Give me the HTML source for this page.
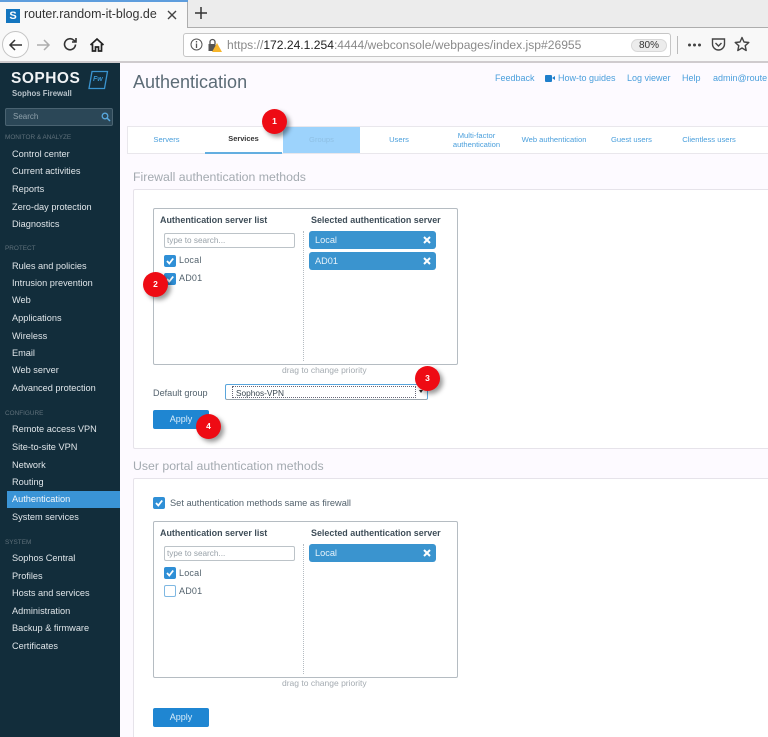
<!DOCTYPE html>
<html><head><meta charset="utf-8">
<style>
html,body{margin:0;padding:0;width:768px;height:737px;overflow:hidden;background:#fdfaff;font-family:"Liberation Sans",sans-serif}
#root{position:relative;width:768px;height:737px;overflow:hidden;filter:blur(.3px)}
.a{position:absolute;white-space:nowrap}
.nav{position:absolute;left:12px;color:#dfe5e9;font-size:9.2px;line-height:12px;white-space:nowrap}
.hd{position:absolute;left:5px;color:#5f707a;font-size:6.4px;line-height:10px;white-space:nowrap}
.tab{position:absolute;top:127px;height:26px;line-height:26px;text-align:center;color:#4a9fdc;font-size:7.6px}
.link{position:absolute;top:72px;color:#4a9fdc;font-size:9px;line-height:12px;white-space:nowrap}
.h2{position:absolute;left:133px;color:#a3aab0;font-size:12.3px;line-height:16px;white-space:nowrap}
.panel{position:absolute;left:133px;width:640px;background:#fff;border:1px solid #e6e3ea;border-radius:2px;box-sizing:border-box}
.box{position:absolute;left:153px;width:305px;height:157px;background:#fff;border:1px solid #b5bcc2;border-radius:2px;box-sizing:border-box}
.div{position:absolute;left:303px;width:0;border-left:1px dotted #b5bcc2}
.bh{position:absolute;color:#3f4e59;font-size:8.95px;font-weight:bold;line-height:12px;white-space:nowrap}
.inp{position:absolute;left:164px;width:131px;height:15px;border:1px solid #bcc3c8;border-radius:2px;box-sizing:border-box;color:#98a1a8;font-size:8.2px;line-height:13px;padding-left:2px;background:#fff}
.chip{position:absolute;left:309px;width:127px;height:18px;background:#3a94cf;border-radius:3px;color:#e6f2fa;font-size:9.2px;line-height:18px;padding-left:6px;box-sizing:border-box}
.chip svg{position:absolute;left:114px;top:5px}
.cb{position:absolute;left:164px;width:12px;height:12px;border-radius:2px;background:#2f8fd6;box-sizing:border-box}
.cb svg{position:absolute;left:1px;top:1px}
.cl{position:absolute;left:179px;color:#53626d;font-size:9px;line-height:12px;letter-spacing:.2px}
.btn{position:absolute;left:153px;width:56px;height:19px;background:#1f86d2;border-radius:2px;color:#d8ecfa;font-size:9px;line-height:18px;text-align:center}
.mark{position:absolute;width:25px;height:25px;border-radius:50%;background:#ee0b14;color:#fff;font-size:8.5px;font-weight:bold;line-height:25px;text-align:center;box-shadow:3px 3px 5px rgba(0,0,0,.4)}
</style></head><body><div id="root">

<!-- browser chrome -->
<div class="a" style="left:0;top:0;width:768px;height:28px;background:#ececec"></div>
<div class="a" style="left:0;top:27px;width:768px;height:1px;background:#adadad"></div>
<div class="a" style="left:0;top:0;width:188px;height:28px;background:#f8f8f8;border-right:1px solid #adadad;box-sizing:border-box"></div>
<div class="a" style="left:0;top:0;width:188px;height:2px;background:#5e9ddd"></div>
<div class="a" style="left:6px;top:9px;width:14px;height:14px;background:#1375bf;color:#fff;font-size:11px;font-weight:bold;line-height:14px;text-align:center">S</div>
<div class="a" style="left:24px;top:6px;color:#333;font-size:12.45px;line-height:17px">router.random-it-blog.de</div>
<svg class="a" style="left:166px;top:9px" width="12" height="12"><path d="M2 2L10 10M10 2L2 10" stroke="#444" stroke-width="1.4"/></svg>
<svg class="a" style="left:194px;top:6px" width="14" height="14"><path d="M7 1V13M1 7H13" stroke="#333" stroke-width="1.5"/></svg>

<div class="a" style="left:0;top:28px;width:768px;height:33px;background:#f8f8f8"></div>
<div class="a" style="left:0;top:61px;width:768px;height:2px;background:#cfcbce"></div>
<div class="a" style="left:2px;top:31px;width:27px;height:27px;border-radius:50%;background:#fdfdfd;border:1px solid #c4c4c4;box-sizing:border-box"></div>
<svg class="a" style="left:7px;top:36px" width="18" height="18"><path d="M15 9H3M8 4L3 9L8 14" fill="none" stroke="#333" stroke-width="1.5"/></svg>
<svg class="a" style="left:34px;top:36px" width="18" height="18"><path d="M3 9H15M10 4L15 9L10 14" fill="none" stroke="#adadad" stroke-width="1.5"/></svg>
<svg class="a" style="left:62px;top:36px" width="17" height="17"><path d="M13.5 8.5A5.5 5.5 0 1 1 11.5 4L13.5 5.5M14 2V6H10" fill="none" stroke="#333" stroke-width="1.6"/></svg>
<svg class="a" style="left:89px;top:37px" width="16" height="16"><path d="M1.5 8L8 2L14.5 8M3.5 7V14H6.5V10H9.5V14H12.5V7" fill="none" stroke="#222" stroke-width="1.7"/></svg>
<div class="a" style="left:183px;top:33px;width:488px;height:24px;background:#fff;border:1px solid #c6c6c6;border-radius:3px;box-sizing:border-box"></div>
<svg class="a" style="left:190px;top:38px" width="13" height="13"><circle cx="6.5" cy="6.5" r="5.5" fill="none" stroke="#555" stroke-width="1"/><path d="M6.5 5.500V10M6.5 3V4.500" stroke="#555" stroke-width="1.3"/></svg>
<svg class="a" style="left:207px;top:38px" width="15" height="14"><path d="M3 6V4A2.500 2.500 0 0 1 8 4V6" fill="none" stroke="#555" stroke-width="1.3"/><rect x="1.5" y="6" width="7" height="7" fill="#555"/><path d="M10 5L15 14H5Z" fill="#f6b52c"/></svg>
<div class="a" style="left:227px;top:37px;color:#8a8a8a;font-size:12.1px;line-height:16px">https://<span style="color:#222">172.24.1.254</span>:4444/webconsole/webpages/index.jsp#26955</div>
<div class="a" style="left:631px;top:39px;width:36px;height:13px;border-radius:7px;background:#ececec;border:1px solid #d8d8d8;box-sizing:border-box;color:#333;font-size:10px;line-height:11px;text-align:center">80%</div>
<div class="a" style="left:677px;top:36px;width:1px;height:18px;background:#bbb"></div>
<svg class="a" style="left:687px;top:41px" width="16" height="8"><circle cx="2.5" cy="4" r="1.5" fill="#444"/><circle cx="7.5" cy="4" r="1.5" fill="#444"/><circle cx="12.5" cy="4" r="1.5" fill="#444"/></svg>
<svg class="a" style="left:711px;top:37px" width="15" height="15"><path d="M1.500 2H13.500V7A6 6 0 0 1 1.500 7Z" fill="none" stroke="#444" stroke-width="1.4"/><path d="M4.500 6L7.500 9L10.500 6" fill="none" stroke="#444" stroke-width="1.4"/></svg>
<svg class="a" style="left:734px;top:36px" width="16" height="16"><path d="M8 1.500L10 6L14.800 6.500L11.200 9.700L12.200 14.500L8 12L3.800 14.500L4.800 9.700L1.200 6.500L6 6Z" fill="none" stroke="#444" stroke-width="1.4" stroke-linejoin="round"/></svg>

<!-- sidebar -->
<div class="a" style="left:0;top:63px;width:120px;height:674px;background:#122d3b"></div>
<div class="a" style="left:11px;top:69px;color:#f0f3f5;font-size:15.5px;font-weight:bold;line-height:20px;letter-spacing:.5px">SOPHOS</div>
<div class="a" style="left:12px;top:88px;color:#b7c2c9;font-size:7.8px;font-weight:bold;line-height:11px">Sophos Firewall</div>
<svg class="a" style="left:87px;top:70px" width="22" height="20"><path d="M5 1.500H20.500L17.500 18.500H2Z" fill="none" stroke="#3a94cf" stroke-width="1.3"/></svg>
<div class="a" style="left:93px;top:75px;color:#3a94cf;font-size:7px;font-style:italic;font-weight:bold;line-height:10px">Fw</div>
<div class="a" style="left:5px;top:108px;width:108px;height:18px;background:#2b4757;border:1px solid #4a6371;border-radius:2px;box-sizing:border-box"></div>
<div class="a" style="left:13px;top:111px;color:#8ea0aa;font-size:8px;line-height:12px">Search</div>
<svg class="a" style="left:101px;top:112px" width="10" height="10"><circle cx="4" cy="4" r="2.8" fill="none" stroke="#58a7dc" stroke-width="1.3"/><path d="M6 6L9 9" stroke="#58a7dc" stroke-width="1.5"/></svg>

<div class="hd" style="top:133px">MONITOR &amp; ANALYZE</div>
<div class="nav" style="top:148px">Control center</div>
<div class="nav" style="top:165px">Current activities</div>
<div class="nav" style="top:183px">Reports</div>
<div class="nav" style="top:201px">Zero-day protection</div>
<div class="nav" style="top:218px">Diagnostics</div>
<div class="hd" style="top:244px">PROTECT</div>
<div class="nav" style="top:260px">Rules and policies</div>
<div class="nav" style="top:277px">Intrusion prevention</div>
<div class="nav" style="top:294px">Web</div>
<div class="nav" style="top:312px">Applications</div>
<div class="nav" style="top:330px">Wireless</div>
<div class="nav" style="top:347px">Email</div>
<div class="nav" style="top:364px">Web server</div>
<div class="nav" style="top:382px">Advanced protection</div>
<div class="hd" style="top:409px">CONFIGURE</div>
<div class="nav" style="top:423px">Remote access VPN</div>
<div class="nav" style="top:441px">Site-to-site VPN</div>
<div class="nav" style="top:459px">Network</div>
<div class="nav" style="top:476px">Routing</div>
<div class="a" style="left:7px;top:491px;width:113px;height:17px;background:#3a94d6"></div>
<div class="nav" style="top:493px;color:#f2f7fb">Authentication</div>
<div class="nav" style="top:511px">System services</div>
<div class="hd" style="top:538px">SYSTEM</div>
<div class="nav" style="top:552px">Sophos Central</div>
<div class="nav" style="top:570px">Profiles</div>
<div class="nav" style="top:587px">Hosts and services</div>
<div class="nav" style="top:605px">Administration</div>
<div class="nav" style="top:622px">Backup &amp; firmware</div>
<div class="nav" style="top:640px">Certificates</div>

<!-- header -->
<div class="a" style="left:133px;top:71px;color:#5c6b76;font-size:18px;line-height:22px">Authentication</div>
<div class="link" style="left:495px">Feedback</div>
<div class="a" style="left:545px;top:75px;width:7px;height:7px;background:#1f7fcb;border-radius:1px"></div>
<div class="a" style="left:552px;top:76px;width:0;height:0;border-right:3px solid #1f7fcb;border-top:2.5px solid transparent;border-bottom:2.5px solid transparent"></div>
<div class="link" style="left:558px">How-to guides</div>
<div class="link" style="left:627px">Log viewer</div>
<div class="link" style="left:682px">Help</div>
<div class="link" style="left:713px">admin@route</div>

<!-- tabs -->
<div class="a" style="left:127px;top:126px;width:650px;height:28px;background:#fff;border:1px solid #e9e7ec;box-sizing:border-box"></div>
<div class="tab" style="left:128px;width:77px">Servers</div>
<div class="tab" style="left:205px;width:77px;color:#333;height:25px;line-height:24px;border-bottom:2px solid #63aee0;font-weight:bold;font-size:7.4px">Services</div>
<div class="tab" style="left:283px;width:77px;background:#9dd3fc;color:#8fc0e4">Groups</div>
<div class="tab" style="left:360px;width:78px">Users</div>
<div class="tab" style="left:438px;width:77px;line-height:8.5px;padding-top:5px;height:21px">Multi-factor<br>authentication</div>
<div class="tab" style="left:515px;width:78px">Web authentication</div>
<div class="tab" style="left:593px;width:77px">Guest users</div>
<div class="tab" style="left:670px;width:78px">Clientless users</div>

<!-- firewall section -->
<div class="h2" style="top:169px">Firewall authentication methods</div>
<div class="panel" style="top:189px;height:260px"></div>
<div class="box" style="top:208px"></div>
<div class="div" style="top:231px;height:130px"></div>
<div class="bh" style="left:160px;top:214px">Authentication server list</div>
<div class="bh" style="left:311px;top:214px">Selected authentication server</div>
<div class="inp" style="top:233px">type to search...</div>
<div class="chip" style="top:231px">Local<svg width="8" height="8"><path d="M1 1L7 7M7 1L1 7" stroke="#fff" stroke-width="2"/></svg></div>
<div class="chip" style="top:252px">AD01<svg width="8" height="8"><path d="M1 1L7 7M7 1L1 7" stroke="#fff" stroke-width="2"/></svg></div>
<div class="cb" style="top:255px"><svg width="10" height="10"><path d="M2 5L4.300 7.500L8.200 2.500" fill="none" stroke="#fff" stroke-width="1.8"/></svg></div>
<div class="cl" style="top:254px">Local</div>
<div class="cb" style="top:273px"><svg width="10" height="10"><path d="M2 5L4.300 7.500L8.200 2.500" fill="none" stroke="#fff" stroke-width="1.8"/></svg></div>
<div class="cl" style="top:272px">AD01</div>
<div class="a" style="left:282px;top:365px;color:#a4abb1;font-size:8.5px;line-height:10px">drag to change priority</div>
<div class="a" style="left:153px;top:387px;color:#53626d;font-size:9.1px;line-height:12px">Default group</div>
<div class="a" style="left:225px;top:384px;width:203px;height:16px;background:#fff;border:1px solid #5aa6dc;border-bottom-color:#9aa4ab;border-radius:2px;box-sizing:border-box"></div>
<div class="a" style="left:232px;top:386px;width:184px;height:12px;border:1px dotted #667;box-sizing:border-box"></div>
<div class="a" style="left:236px;top:387px;color:#3a4751;font-size:8.3px;line-height:12px">Sophos-VPN</div>
<div class="a" style="left:419px;top:390px;width:0;height:0;border-top:3px solid #222;border-left:2.5px solid transparent;border-right:2.5px solid transparent"></div>
<div class="btn" style="top:410px">Apply</div>

<!-- user portal section -->
<div class="h2" style="top:458px">User portal authentication methods</div>
<div class="panel" style="top:478px;height:270px"></div>
<div class="a" style="left:153px;top:497px;width:12px;height:12px;border-radius:2px;background:#2f8fd6"></div>
<svg class="a" style="left:154px;top:498px" width="10" height="10"><path d="M2 5L4.300 7.500L8.200 2.500" fill="none" stroke="#fff" stroke-width="1.8"/></svg>
<div class="a" style="left:170px;top:497px;color:#53626d;font-size:9.25px;line-height:12px">Set authentication methods same as firewall</div>
<div class="box" style="top:521px"></div>
<div class="div" style="top:544px;height:130px"></div>
<div class="bh" style="left:160px;top:527px">Authentication server list</div>
<div class="bh" style="left:311px;top:527px">Selected authentication server</div>
<div class="inp" style="top:546px">type to search...</div>
<div class="chip" style="top:544px">Local<svg width="8" height="8"><path d="M1 1L7 7M7 1L1 7" stroke="#fff" stroke-width="2"/></svg></div>
<div class="cb" style="top:567px"><svg width="10" height="10"><path d="M2 5L4.300 7.500L8.200 2.500" fill="none" stroke="#fff" stroke-width="1.8"/></svg></div>
<div class="cl" style="top:567px">Local</div>
<div class="cb" style="top:585px;background:#fff;border:1px solid #7fb8e2"></div>
<div class="cl" style="top:585px">AD01</div>
<div class="a" style="left:282px;top:678px;color:#a4abb1;font-size:8.5px;line-height:10px">drag to change priority</div>
<div class="btn" style="top:708px">Apply</div>

<!-- annotation markers -->
<div class="mark" style="left:262px;top:109px">1</div>
<div class="mark" style="left:143px;top:272px">2</div>
<div class="mark" style="left:415px;top:366px">3</div>
<div class="mark" style="left:196px;top:414px">4</div>
</div></body></html>
